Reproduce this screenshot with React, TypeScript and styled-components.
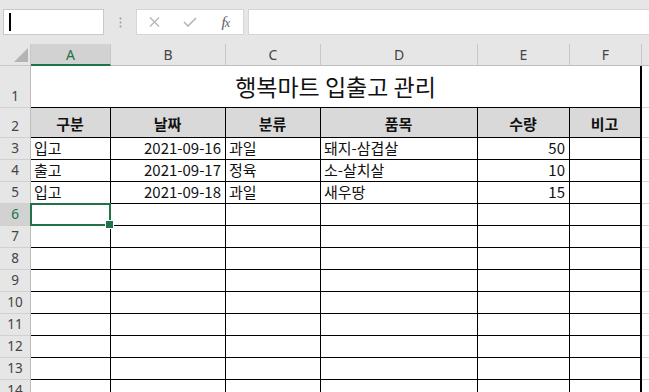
import React from "react";
import styled, { createGlobalStyle, css } from "styled-components";

const GREEN = "#217346";
const HEAD_BG = "#e6e6e6";

const GlobalStyle = createGlobalStyle`
  html, body {
    margin: 0;
    padding: 0;
    background: #ffffff;
    overflow: hidden;
  }
  * {
    box-sizing: border-box;
  }
`;

const Window = styled.div`
  width: 649px;
  height: 392px;
  overflow: hidden;
  display: flex;
  flex-direction: column;
  background: #ffffff;
  font-family: "Noto Sans CJK KR", "Noto Sans", sans-serif;
`;

// formula bar
const FormulaBar = styled.div`
  flex: none;
  height: 44px;
  display: flex;
  align-items: center;
  padding-left: 3px;
  background: ${HEAD_BG};
`;

const NameBox = styled.div`
  width: 101px;
  height: 26px;
  display: flex;
  align-items: center;
  padding-left: 5px;
  background: #ffffff;
  border: 1px solid #c8c8c8;
`;

const Caret = styled.span`
  width: 2px;
  height: 18px;
  background: #000000;
`;

const Grip = styled.div`
  width: 32px;
  display: flex;
  justify-content: center;
`;

const ButtonGroup = styled.div`
  width: 108px;
  height: 26px;
  display: flex;
  align-items: center;
  background: #ffffff;
  border: 1px solid #d6d6d6;
`;

const IconSlot = styled.div`
  width: 36px;
  display: flex;
  justify-content: center;
  align-items: center;
`;

const Fx = styled.span`
  font-family: "Liberation Serif", serif;
  font-style: italic;
  font-size: 15px;
  color: #5a5a5a;
  letter-spacing: -1px;

  small {
    font-size: 12px;
  }
`;

const FormulaInput = styled.div`
  flex: 1;
  height: 26px;
  margin-left: 4px;
  background: #ffffff;
  border: 1px solid #d6d6d6;
  border-right: none;
`;

// sheet
const Sheet = styled.div`
  display: grid;
  grid-template-columns: 31px 80px 115px 95px 157px 92px 72px 40px;
  grid-template-rows: 22px 42px 30px repeat(12, 22px);
`;

const Corner = styled.div`
  background: ${HEAD_BG};
  border-right: 1px solid #c8c8c8;
  border-bottom: 1px solid #c8c8c8;
  display: flex;
  justify-content: flex-end;
  align-items: flex-end;
  padding: 0 2px 3px 0;
`;

const ColHead = styled.div<{ $active?: boolean }>`
  display: flex;
  justify-content: center;
  align-items: center;
  font-family: "Noto Sans", sans-serif;
  font-size: 14px;
  color: #444444;
  background: ${HEAD_BG};
  border-right: 1px solid #c8c8c8;
  border-bottom: 1px solid #bdbdbd;
  ${(p) =>
    p.$active &&
    css`
      background: #d2d2d2;
      color: ${GREEN};
      border-bottom: 2px solid ${GREEN};
    `}
`;

const RowHead = styled.div<{ $active?: boolean }>`
  display: flex;
  justify-content: center;
  align-items: flex-end;
  padding-bottom: 1px;
  font-family: "Noto Sans", sans-serif;
  font-size: 13.5px;
  line-height: 19px;
  color: #444444;
  background: ${HEAD_BG};
  border-right: 1px solid #bdbdbd;
  border-bottom: 1px solid #d0d0d0;
  ${(p) =>
    p.$active &&
    css`
      background: #d2d2d2;
      color: ${GREEN};
    `}
`;

const Title = styled.div`
  grid-column: 2 / 8;
  display: flex;
  justify-content: center;
  align-items: flex-end;
  padding-bottom: 6px;
  font-size: 23px;
  line-height: 30px;
  color: #111111;
  border-right: 2px solid #000000;
  border-bottom: 1px solid #000000;
`;

const Cell = styled.div<{
  $align?: "left" | "right" | "center";
  $head?: boolean;
  $last?: boolean;
  $selected?: boolean;
}>`
  position: relative;
  display: flex;
  align-items: flex-end;
  justify-content: ${(p) =>
    p.$align === "right" ? "flex-end" : p.$align === "center" ? "center" : "flex-start"};
  padding: 0 4px 0 3px;
  padding-bottom: ${(p) => (p.$head ? "3px" : "1px")};
  font-size: 15px;
  line-height: 20px;
  font-weight: ${(p) => (p.$head ? 700 : 400)};
  color: #111111;
  white-space: nowrap;
  overflow: visible;
  background: ${(p) => (p.$head ? "#d9d9d9" : "#ffffff")};
  border-right: ${(p) => (p.$last ? "2px" : "1px")} solid #000000;
  border-bottom: 1px solid #000000;
  ${(p) =>
    p.$selected &&
    css`
      z-index: 2;
      &::after {
        content: "";
        position: absolute;
        left: -1px;
        top: -1px;
        right: -1px;
        bottom: -1px;
        border: 2px solid ${GREEN};
      }
      &::before {
        content: "";
        position: absolute;
        right: -4px;
        bottom: -4px;
        width: 7px;
        height: 7px;
        background: ${GREEN};
        border: 1px solid #ffffff;
        z-index: 3;
      }
    `}
`;

const Gridline = styled.div`
  border-bottom: 1px solid #d4d4d4;
`;

type Align = "left" | "right";

const columns = ["A", "B", "C", "D", "E", "F"];
const headers = ["구분", "날짜", "분류", "품목", "수량", "비고"];
const aligns: Align[] = ["left", "right", "left", "left", "right", "left"];
const records = [
  ["입고", "2021-09-16", "과일", "돼지-삼겹살", "50", ""],
  ["출고", "2021-09-17", "정육", "소-살치살", "10", ""],
  ["입고", "2021-09-18", "과일", "새우땅", "15", ""],
];

const rowNumbers = Array.from({ length: 12 }, (_, i) => i + 3);

const App = (): JSX.Element => {
  return (
    <Window>
      <GlobalStyle />
      <FormulaBar>
        <NameBox>
          <Caret />
        </NameBox>
        <Grip>
          <svg width="3" height="11" viewBox="0 0 3 11">
            <circle cx="1.5" cy="1.5" r="1" fill="#9a9a9a" />
            <circle cx="1.5" cy="5.5" r="1" fill="#9a9a9a" />
            <circle cx="1.5" cy="9.5" r="1" fill="#9a9a9a" />
          </svg>
        </Grip>
        <ButtonGroup>
          <IconSlot>
            <svg width="11" height="10" viewBox="0 0 11 10">
              <path d="M1 0.5 L10 9.5 M10 0.5 L1 9.5" stroke="#b4b4b4" strokeWidth="1.3" />
            </svg>
          </IconSlot>
          <IconSlot>
            <svg width="14" height="10" viewBox="0 0 14 10">
              <path d="M1 5 L5 9 L13 1" stroke="#b4b4b4" strokeWidth="1.6" fill="none" />
            </svg>
          </IconSlot>
          <IconSlot>
            <Fx>
              f<small>x</small>
            </Fx>
          </IconSlot>
        </ButtonGroup>
        <FormulaInput />
      </FormulaBar>

      <Sheet>
        <Corner>
          <svg width="14" height="14" viewBox="0 0 14 14">
            <path d="M14 0 L14 14 L0 14 Z" fill="#b4b4b4" />
          </svg>
        </Corner>
        {columns.map((c, i) => (
          <ColHead key={c} $active={i === 0}>
            {c}
          </ColHead>
        ))}
        <ColHead />

        <RowHead>1</RowHead>
        <Title>행복마트 입출고 관리</Title>
        <Gridline />

        <RowHead>2</RowHead>
        {headers.map((h, i) => (
          <Cell key={h} $head $align="center" $last={i === 5}>
            {h}
          </Cell>
        ))}
        <Gridline />

        {rowNumbers.map((n) => {
          const record = records[n - 3] || ["", "", "", "", "", ""];
          return (
            <React.Fragment key={n}>
              <RowHead $active={n === 6}>{n}</RowHead>
              {record.map((value, i) => (
                <Cell
                  key={i}
                  $align={aligns[i]}
                  $last={i === 5}
                  $selected={n === 6 && i === 0}
                >
                  {value}
                </Cell>
              ))}
              <Gridline />
            </React.Fragment>
          );
        })}
      </Sheet>
    </Window>
  );
};

export default App;
